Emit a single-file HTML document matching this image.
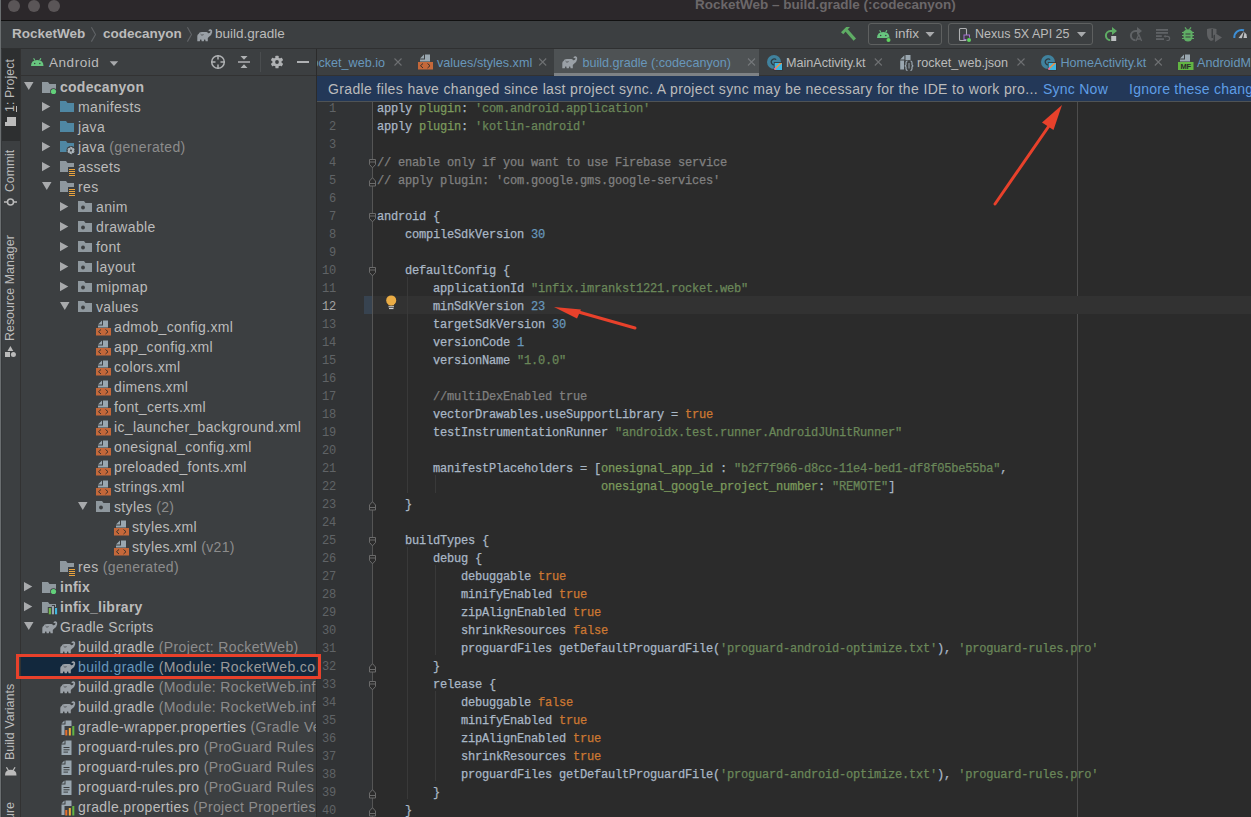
<!DOCTYPE html><html><head><meta charset="utf-8"><style>
*{box-sizing:border-box}
html,body{margin:0;padding:0}
body{width:1251px;height:817px;overflow:hidden;position:relative;background:#2b2b2b;font-family:"Liberation Sans",sans-serif;color:#bbbbbb}
.a{position:absolute}
.ui{font-family:"Liberation Sans",sans-serif;white-space:pre}
.mono{font-family:"Liberation Mono",monospace;font-size:12px;letter-spacing:-0.2px;white-space:pre;-webkit-text-stroke:0.25px}
.t{color:#a9b7c6}.s{color:#6a8759}.n{color:#6897bb}.k{color:#cc7832}.c{color:#808080}.l{color:#7b9a5c}
.ln{color:#606366;text-align:right;width:40px;-webkit-text-stroke:0}
.tr{font-size:14px;letter-spacing:0.35px;color:#bbbbbb;line-height:20px;height:20px}
.g{color:#8c8c8c}
svg{position:absolute;overflow:visible}
</style></head><body>

<div class="a" style="left:0;top:0;width:1251px;height:20px;background:#2c282b"></div>
<div class="a" style="left:8px;top:0px;width:12px;height:12px;border-radius:50%;background:#5a5557"></div>
<div class="a" style="left:28px;top:0px;width:12px;height:12px;border-radius:50%;background:#5a5557"></div>
<div class="a" style="left:48px;top:0px;width:12px;height:12px;border-radius:50%;background:#5a5557"></div>
<div class="a ui" style="left:695px;top:-3px;font-size:13.5px;font-weight:bold;color:#6b6769;line-height:16px">RocketWeb – build.gradle (:codecanyon)</div>
<div class="a" style="left:0;top:20px;width:1251px;height:1px;background:#111"></div>
<div class="a" style="left:0;top:0;width:1px;height:817px;background:#6a6e70;z-index:50"></div>
<div class="a" style="left:1px;top:49px;width:1px;height:768px;background:#36393b;z-index:50"></div>
<div class="a" style="left:1px;top:21px;width:1250px;height:27px;background:#3c3f41"></div>
<div class="a" style="left:0;top:48px;width:1251px;height:1px;background:#2f3031"></div>
<div class="a ui" style="left:12px;top:26px;font-size:13.5px;font-weight:bold;color:#bbbbbb;line-height:16px">RocketWeb</div>
<div class="a ui" style="left:103px;top:26px;font-size:13.5px;font-weight:bold;color:#bbbbbb;line-height:16px">codecanyon</div>
<div class="a ui" style="left:215px;top:26px;font-size:13.5px;color:#bbbbbb;line-height:16px">build.gradle</div>
<div class="a" style="left:1px;top:49px;width:19px;height:768px;background:#3c3f41"></div>
<div class="a" style="left:20px;top:49px;width:1px;height:768px;background:#323232"></div>
<div class="a" style="left:1px;top:49px;width:19px;height:92px;background:#2d2f30"></div>
<div class="a" style="left:21px;top:49px;width:295px;height:768px;background:#3c3f41"></div>
<div class="a" style="left:21px;top:75px;width:295px;height:1px;background:#323232"></div>
<div class="a ui" style="left:49px;top:55px;font-size:13.5px;letter-spacing:0.55px;color:#bbbbbb;line-height:16px">Android</div>
<div class="a" style="left:21px;top:76px;width:295px;height:741px;overflow:hidden">
<div class="a" style="left:-21px;top:-76px;width:1251px;height:817px">
<div class="a" style="left:21px;top:657px;width:295px;height:20px;background:#12283d"></div>
<svg style="left:24px;top:82px" width="10" height="9"><path d="M0 0H9.5L4.75 8Z" fill="#a8aaac"/></svg>
<svg style="left:42px;top:82px" width="14" height="11"><path d="M0 0H6L7.5 2H14V11H0Z" fill="#8f989e"/></svg><svg style="left:42px;top:82px" width="16" height="13"><circle cx="11.5" cy="9.5" r="3.3" fill="#3c3f41"/><circle cx="11.5" cy="9.5" r="2.6" fill="#62d07a"/></svg>
<div class="a ui tr" style="left:60px;top:77px"><span style="font-weight:bold;letter-spacing:0.25px">codecanyon</span></div>
<svg style="left:42px;top:101.8px" width="9" height="10"><path d="M0 0L8.3 4.6L0 9.2Z" fill="#a8aaac"/></svg>
<svg style="left:60px;top:101px" width="14" height="11"><path d="M0 0H6L7.5 2H14V11H0Z" fill="#4f87a3"/></svg>
<div class="a ui tr" style="left:78px;top:97px">manifests</div>
<svg style="left:42px;top:121.8px" width="9" height="10"><path d="M0 0L8.3 4.6L0 9.2Z" fill="#a8aaac"/></svg>
<svg style="left:60px;top:121px" width="14" height="11"><path d="M0 0H6L7.5 2H14V11H0Z" fill="#4f87a3"/></svg>
<div class="a ui tr" style="left:78px;top:117px">java</div>
<svg style="left:42px;top:141.8px" width="9" height="10"><path d="M0 0L8.3 4.6L0 9.2Z" fill="#a8aaac"/></svg>
<svg style="left:60px;top:141px" width="14" height="11"><path d="M0 0H6L7.5 2H14V11H0Z" fill="#4f87a3"/></svg><svg style="left:60px;top:141px" width="18" height="15"><circle cx="11" cy="9.5" r="4.6" fill="#3c3f41"/><g fill="#aeb7bd" transform="translate(11 9.5)"><path d="M0 0L-1 -3.8Q1.5 -4 2 -2Z" transform="rotate(0)"/><path d="M0 0L-1 -3.8Q1.5 -4 2 -2Z" transform="rotate(60)"/><path d="M0 0L-1 -3.8Q1.5 -4 2 -2Z" transform="rotate(120)"/><path d="M0 0L-1 -3.8Q1.5 -4 2 -2Z" transform="rotate(180)"/><path d="M0 0L-1 -3.8Q1.5 -4 2 -2Z" transform="rotate(240)"/><path d="M0 0L-1 -3.8Q1.5 -4 2 -2Z" transform="rotate(300)"/></g><circle cx="11" cy="9.5" r="1" fill="#3c3f41"/></svg>
<div class="a ui tr" style="left:78px;top:137px">java<span class="g"> (generated)</span></div>
<svg style="left:42px;top:161.8px" width="9" height="10"><path d="M0 0L8.3 4.6L0 9.2Z" fill="#a8aaac"/></svg>
<svg style="left:60px;top:161px" width="14" height="11"><path d="M0 0H6L7.5 2H14V11H0Z" fill="#8f989e"/></svg><svg style="left:60px;top:161px" width="18" height="16"><rect x="8" y="6" width="8.5" height="10" fill="#3c3f41"/><rect x="9" y="8" width="6" height="1" fill="#e8a33e"/><rect x="9" y="10" width="6" height="1" fill="#e8a33e"/><rect x="9" y="12" width="6" height="1" fill="#e8a33e"/><rect x="9" y="14" width="6" height="1" fill="#e8a33e"/></svg>
<div class="a ui tr" style="left:78px;top:157px">assets</div>
<svg style="left:42px;top:182px" width="10" height="9"><path d="M0 0H9.5L4.75 8Z" fill="#a8aaac"/></svg>
<svg style="left:60px;top:181px" width="14" height="11"><path d="M0 0H6L7.5 2H14V11H0Z" fill="#8f989e"/></svg><svg style="left:60px;top:181px" width="18" height="16"><rect x="8" y="6" width="8.5" height="10" fill="#3c3f41"/><rect x="9" y="8" width="6" height="1" fill="#e8a33e"/><rect x="9" y="10" width="6" height="1" fill="#e8a33e"/><rect x="9" y="12" width="6" height="1" fill="#e8a33e"/><rect x="9" y="14" width="6" height="1" fill="#e8a33e"/></svg>
<div class="a ui tr" style="left:78px;top:177px">res</div>
<svg style="left:60px;top:201.8px" width="9" height="10"><path d="M0 0L8.3 4.6L0 9.2Z" fill="#a8aaac"/></svg>
<svg style="left:78px;top:201px" width="14" height="11"><path d="M0 0H6L7.5 2H14V11H0Z" fill="#8f989e"/></svg><svg style="left:78px;top:201px" width="14" height="11"><circle cx="5" cy="6.5" r="1.9" fill="#3c3f41"/></svg>
<div class="a ui tr" style="left:96px;top:197px">anim</div>
<svg style="left:60px;top:221.8px" width="9" height="10"><path d="M0 0L8.3 4.6L0 9.2Z" fill="#a8aaac"/></svg>
<svg style="left:78px;top:221px" width="14" height="11"><path d="M0 0H6L7.5 2H14V11H0Z" fill="#8f989e"/></svg><svg style="left:78px;top:221px" width="14" height="11"><circle cx="5" cy="6.5" r="1.9" fill="#3c3f41"/></svg>
<div class="a ui tr" style="left:96px;top:217px">drawable</div>
<svg style="left:60px;top:241.8px" width="9" height="10"><path d="M0 0L8.3 4.6L0 9.2Z" fill="#a8aaac"/></svg>
<svg style="left:78px;top:241px" width="14" height="11"><path d="M0 0H6L7.5 2H14V11H0Z" fill="#8f989e"/></svg><svg style="left:78px;top:241px" width="14" height="11"><circle cx="5" cy="6.5" r="1.9" fill="#3c3f41"/></svg>
<div class="a ui tr" style="left:96px;top:237px">font</div>
<svg style="left:60px;top:261.8px" width="9" height="10"><path d="M0 0L8.3 4.6L0 9.2Z" fill="#a8aaac"/></svg>
<svg style="left:78px;top:261px" width="14" height="11"><path d="M0 0H6L7.5 2H14V11H0Z" fill="#8f989e"/></svg><svg style="left:78px;top:261px" width="14" height="11"><circle cx="5" cy="6.5" r="1.9" fill="#3c3f41"/></svg>
<div class="a ui tr" style="left:96px;top:257px">layout</div>
<svg style="left:60px;top:281.8px" width="9" height="10"><path d="M0 0L8.3 4.6L0 9.2Z" fill="#a8aaac"/></svg>
<svg style="left:78px;top:281px" width="14" height="11"><path d="M0 0H6L7.5 2H14V11H0Z" fill="#8f989e"/></svg><svg style="left:78px;top:281px" width="14" height="11"><circle cx="5" cy="6.5" r="1.9" fill="#3c3f41"/></svg>
<div class="a ui tr" style="left:96px;top:277px">mipmap</div>
<svg style="left:60px;top:302px" width="10" height="9"><path d="M0 0H9.5L4.75 8Z" fill="#a8aaac"/></svg>
<svg style="left:78px;top:301px" width="14" height="11"><path d="M0 0H6L7.5 2H14V11H0Z" fill="#8f989e"/></svg><svg style="left:78px;top:301px" width="14" height="11"><circle cx="5" cy="6.5" r="1.9" fill="#3c3f41"/></svg>
<div class="a ui tr" style="left:96px;top:297px">values</div>
<svg style="left:96px;top:320px" width="16" height="19"><path d="M2 7V4L5.5 0.5V4H2.5" fill="none"/><path d="M2 4.5L6 0.5V4.5Z" fill="#9aa7b0"/><path d="M7 0.5H12V7.5H2V5.5H7Z" fill="#9aa7b0"/><rect x="0" y="8" width="15" height="7.5" fill="#c4683a"/><path d="M5 9.5L2.5 11.7L5 14M9.5 9.5L12 11.7L9.5 14" stroke="#2b2b2b" stroke-width="0.9" fill="none"/></svg>
<div class="a ui tr" style="left:114px;top:317px">admob_config.xml</div>
<svg style="left:96px;top:340px" width="16" height="19"><path d="M2 7V4L5.5 0.5V4H2.5" fill="none"/><path d="M2 4.5L6 0.5V4.5Z" fill="#9aa7b0"/><path d="M7 0.5H12V7.5H2V5.5H7Z" fill="#9aa7b0"/><rect x="0" y="8" width="15" height="7.5" fill="#c4683a"/><path d="M5 9.5L2.5 11.7L5 14M9.5 9.5L12 11.7L9.5 14" stroke="#2b2b2b" stroke-width="0.9" fill="none"/></svg>
<div class="a ui tr" style="left:114px;top:337px">app_config.xml</div>
<svg style="left:96px;top:360px" width="16" height="19"><path d="M2 7V4L5.5 0.5V4H2.5" fill="none"/><path d="M2 4.5L6 0.5V4.5Z" fill="#9aa7b0"/><path d="M7 0.5H12V7.5H2V5.5H7Z" fill="#9aa7b0"/><rect x="0" y="8" width="15" height="7.5" fill="#c4683a"/><path d="M5 9.5L2.5 11.7L5 14M9.5 9.5L12 11.7L9.5 14" stroke="#2b2b2b" stroke-width="0.9" fill="none"/></svg>
<div class="a ui tr" style="left:114px;top:357px">colors.xml</div>
<svg style="left:96px;top:380px" width="16" height="19"><path d="M2 7V4L5.5 0.5V4H2.5" fill="none"/><path d="M2 4.5L6 0.5V4.5Z" fill="#9aa7b0"/><path d="M7 0.5H12V7.5H2V5.5H7Z" fill="#9aa7b0"/><rect x="0" y="8" width="15" height="7.5" fill="#c4683a"/><path d="M5 9.5L2.5 11.7L5 14M9.5 9.5L12 11.7L9.5 14" stroke="#2b2b2b" stroke-width="0.9" fill="none"/></svg>
<div class="a ui tr" style="left:114px;top:377px">dimens.xml</div>
<svg style="left:96px;top:400px" width="16" height="19"><path d="M2 7V4L5.5 0.5V4H2.5" fill="none"/><path d="M2 4.5L6 0.5V4.5Z" fill="#9aa7b0"/><path d="M7 0.5H12V7.5H2V5.5H7Z" fill="#9aa7b0"/><rect x="0" y="8" width="15" height="7.5" fill="#c4683a"/><path d="M5 9.5L2.5 11.7L5 14M9.5 9.5L12 11.7L9.5 14" stroke="#2b2b2b" stroke-width="0.9" fill="none"/></svg>
<div class="a ui tr" style="left:114px;top:397px">font_certs.xml</div>
<svg style="left:96px;top:420px" width="16" height="19"><path d="M2 7V4L5.5 0.5V4H2.5" fill="none"/><path d="M2 4.5L6 0.5V4.5Z" fill="#9aa7b0"/><path d="M7 0.5H12V7.5H2V5.5H7Z" fill="#9aa7b0"/><rect x="0" y="8" width="15" height="7.5" fill="#c4683a"/><path d="M5 9.5L2.5 11.7L5 14M9.5 9.5L12 11.7L9.5 14" stroke="#2b2b2b" stroke-width="0.9" fill="none"/></svg>
<div class="a ui tr" style="left:114px;top:417px">ic_launcher_background.xml</div>
<svg style="left:96px;top:440px" width="16" height="19"><path d="M2 7V4L5.5 0.5V4H2.5" fill="none"/><path d="M2 4.5L6 0.5V4.5Z" fill="#9aa7b0"/><path d="M7 0.5H12V7.5H2V5.5H7Z" fill="#9aa7b0"/><rect x="0" y="8" width="15" height="7.5" fill="#c4683a"/><path d="M5 9.5L2.5 11.7L5 14M9.5 9.5L12 11.7L9.5 14" stroke="#2b2b2b" stroke-width="0.9" fill="none"/></svg>
<div class="a ui tr" style="left:114px;top:437px">onesignal_config.xml</div>
<svg style="left:96px;top:460px" width="16" height="19"><path d="M2 7V4L5.5 0.5V4H2.5" fill="none"/><path d="M2 4.5L6 0.5V4.5Z" fill="#9aa7b0"/><path d="M7 0.5H12V7.5H2V5.5H7Z" fill="#9aa7b0"/><rect x="0" y="8" width="15" height="7.5" fill="#c4683a"/><path d="M5 9.5L2.5 11.7L5 14M9.5 9.5L12 11.7L9.5 14" stroke="#2b2b2b" stroke-width="0.9" fill="none"/></svg>
<div class="a ui tr" style="left:114px;top:457px">preloaded_fonts.xml</div>
<svg style="left:96px;top:480px" width="16" height="19"><path d="M2 7V4L5.5 0.5V4H2.5" fill="none"/><path d="M2 4.5L6 0.5V4.5Z" fill="#9aa7b0"/><path d="M7 0.5H12V7.5H2V5.5H7Z" fill="#9aa7b0"/><rect x="0" y="8" width="15" height="7.5" fill="#c4683a"/><path d="M5 9.5L2.5 11.7L5 14M9.5 9.5L12 11.7L9.5 14" stroke="#2b2b2b" stroke-width="0.9" fill="none"/></svg>
<div class="a ui tr" style="left:114px;top:477px">strings.xml</div>
<svg style="left:78px;top:502px" width="10" height="9"><path d="M0 0H9.5L4.75 8Z" fill="#a8aaac"/></svg>
<svg style="left:96px;top:501px" width="14" height="11"><path d="M0 0H6L7.5 2H14V11H0Z" fill="#8f989e"/></svg><svg style="left:96px;top:501px" width="14" height="11"><circle cx="5" cy="6.5" r="1.9" fill="#3c3f41"/></svg>
<div class="a ui tr" style="left:114px;top:497px">styles<span class="g"> (2)</span></div>
<svg style="left:114px;top:520px" width="16" height="19"><path d="M2 7V4L5.5 0.5V4H2.5" fill="none"/><path d="M2 4.5L6 0.5V4.5Z" fill="#9aa7b0"/><path d="M7 0.5H12V7.5H2V5.5H7Z" fill="#9aa7b0"/><rect x="0" y="8" width="15" height="7.5" fill="#c4683a"/><path d="M5 9.5L2.5 11.7L5 14M9.5 9.5L12 11.7L9.5 14" stroke="#2b2b2b" stroke-width="0.9" fill="none"/></svg>
<div class="a ui tr" style="left:132px;top:517px">styles.xml</div>
<svg style="left:114px;top:540px" width="16" height="19"><path d="M2 7V4L5.5 0.5V4H2.5" fill="none"/><path d="M2 4.5L6 0.5V4.5Z" fill="#9aa7b0"/><path d="M7 0.5H12V7.5H2V5.5H7Z" fill="#9aa7b0"/><rect x="0" y="8" width="15" height="7.5" fill="#c4683a"/><path d="M5 9.5L2.5 11.7L5 14M9.5 9.5L12 11.7L9.5 14" stroke="#2b2b2b" stroke-width="0.9" fill="none"/></svg>
<div class="a ui tr" style="left:132px;top:537px">styles.xml<span class="g"> (v21)</span></div>
<svg style="left:60px;top:561px" width="14" height="11"><path d="M0 0H6L7.5 2H14V11H0Z" fill="#8f989e"/></svg><svg style="left:60px;top:561px" width="18" height="16"><rect x="8" y="6" width="8.5" height="10" fill="#3c3f41"/><rect x="9" y="8" width="6" height="1" fill="#e8a33e"/><rect x="9" y="10" width="6" height="1" fill="#e8a33e"/><rect x="9" y="12" width="6" height="1" fill="#e8a33e"/><rect x="9" y="14" width="6" height="1" fill="#e8a33e"/></svg>
<div class="a ui tr" style="left:78px;top:557px">res<span class="g"> (generated)</span></div>
<svg style="left:24px;top:581.8px" width="9" height="10"><path d="M0 0L8.3 4.6L0 9.2Z" fill="#a8aaac"/></svg>
<svg style="left:42px;top:582px" width="14" height="11"><path d="M0 0H6L7.5 2H14V11H0Z" fill="#8f989e"/></svg><svg style="left:42px;top:582px" width="16" height="13"><circle cx="11.5" cy="9.5" r="3.3" fill="#3c3f41"/><circle cx="11.5" cy="9.5" r="2.6" fill="#62d07a"/></svg>
<div class="a ui tr" style="left:60px;top:577px"><span style="font-weight:bold;letter-spacing:0.25px">infix</span></div>
<svg style="left:24px;top:601.8px" width="9" height="10"><path d="M0 0L8.3 4.6L0 9.2Z" fill="#a8aaac"/></svg>
<svg style="left:42px;top:602px" width="14" height="11"><path d="M0 0H6L7.5 2H14V11H0Z" fill="#8f989e"/></svg><svg style="left:42px;top:602px" width="18" height="15"><path d="M5.8 5H9.9V3H13V5H16.1V13.3H5.8Z" fill="#3c3f41"/><rect x="6.8" y="6" width="2.1" height="6.3" fill="#72b94b"/><rect x="9.9" y="4" width="2.1" height="8.3" fill="#9aa7b0"/><rect x="13" y="6" width="2.1" height="6.3" fill="#40b6e0"/></svg>
<div class="a ui tr" style="left:60px;top:597px"><span style="font-weight:bold;letter-spacing:0.25px">infix_library</span></div>
<svg style="left:24px;top:622px" width="10" height="9"><path d="M0 0H9.5L4.75 8Z" fill="#a8aaac"/></svg>
<svg style="left:42px;top:621px" width="16" height="13" viewBox="0 0 16 13"><path d="M0.3 12.2V7.2Q0.3 5.6 1.6 5L2.6 3.6Q3.4 3 5 3H9.4Q10.6 3 11 4.2Q12.6 4.4 13.3 3.3Q13.7 2.6 13.2 2.1Q12.6 1.7 12 2.3L11.4 1.2Q12.5 0 13.8 0.3Q15.6 0.9 15.2 3.2Q14.8 5.6 12.3 7.6L10.8 9V12.2H8.6L8.2 10.6H7.2L6.8 12.2H4.7L4.3 10.6H3.2L2.8 12.2Z" fill="#9aa0a6"/><path d="M3.6 5.2Q4.6 7 6.6 5.6" stroke="#3c3f41" stroke-width="0.9" fill="none" opacity="0.8"/></svg>
<div class="a ui tr" style="left:60px;top:617px">Gradle Scripts</div>
<svg style="left:60px;top:641px" width="16" height="13" viewBox="0 0 16 13"><path d="M0.3 12.2V7.2Q0.3 5.6 1.6 5L2.6 3.6Q3.4 3 5 3H9.4Q10.6 3 11 4.2Q12.6 4.4 13.3 3.3Q13.7 2.6 13.2 2.1Q12.6 1.7 12 2.3L11.4 1.2Q12.5 0 13.8 0.3Q15.6 0.9 15.2 3.2Q14.8 5.6 12.3 7.6L10.8 9V12.2H8.6L8.2 10.6H7.2L6.8 12.2H4.7L4.3 10.6H3.2L2.8 12.2Z" fill="#9aa0a6"/><path d="M3.6 5.2Q4.6 7 6.6 5.6" stroke="#3c3f41" stroke-width="0.9" fill="none" opacity="0.8"/></svg>
<div class="a ui tr" style="left:78px;top:637px">build.gradle<span class="g"> (Project: RocketWeb)</span></div>
<svg style="left:60px;top:661px" width="16" height="13" viewBox="0 0 16 13"><path d="M0.3 12.2V7.2Q0.3 5.6 1.6 5L2.6 3.6Q3.4 3 5 3H9.4Q10.6 3 11 4.2Q12.6 4.4 13.3 3.3Q13.7 2.6 13.2 2.1Q12.6 1.7 12 2.3L11.4 1.2Q12.5 0 13.8 0.3Q15.6 0.9 15.2 3.2Q14.8 5.6 12.3 7.6L10.8 9V12.2H8.6L8.2 10.6H7.2L6.8 12.2H4.7L4.3 10.6H3.2L2.8 12.2Z" fill="#9aa0a6"/><path d="M3.6 5.2Q4.6 7 6.6 5.6" stroke="#3c3f41" stroke-width="0.9" fill="none" opacity="0.8"/></svg>
<div class="a ui tr" style="left:78px;top:657px"><span style="color:#6897bb">build.gradle</span><span style="color:#9a9a9a"> (Module: RocketWeb.codecanyon)</span></div>
<svg style="left:60px;top:681px" width="16" height="13" viewBox="0 0 16 13"><path d="M0.3 12.2V7.2Q0.3 5.6 1.6 5L2.6 3.6Q3.4 3 5 3H9.4Q10.6 3 11 4.2Q12.6 4.4 13.3 3.3Q13.7 2.6 13.2 2.1Q12.6 1.7 12 2.3L11.4 1.2Q12.5 0 13.8 0.3Q15.6 0.9 15.2 3.2Q14.8 5.6 12.3 7.6L10.8 9V12.2H8.6L8.2 10.6H7.2L6.8 12.2H4.7L4.3 10.6H3.2L2.8 12.2Z" fill="#9aa0a6"/><path d="M3.6 5.2Q4.6 7 6.6 5.6" stroke="#3c3f41" stroke-width="0.9" fill="none" opacity="0.8"/></svg>
<div class="a ui tr" style="left:78px;top:677px">build.gradle<span class="g"> (Module: RocketWeb.infix)</span></div>
<svg style="left:60px;top:701px" width="16" height="13" viewBox="0 0 16 13"><path d="M0.3 12.2V7.2Q0.3 5.6 1.6 5L2.6 3.6Q3.4 3 5 3H9.4Q10.6 3 11 4.2Q12.6 4.4 13.3 3.3Q13.7 2.6 13.2 2.1Q12.6 1.7 12 2.3L11.4 1.2Q12.5 0 13.8 0.3Q15.6 0.9 15.2 3.2Q14.8 5.6 12.3 7.6L10.8 9V12.2H8.6L8.2 10.6H7.2L6.8 12.2H4.7L4.3 10.6H3.2L2.8 12.2Z" fill="#9aa0a6"/><path d="M3.6 5.2Q4.6 7 6.6 5.6" stroke="#3c3f41" stroke-width="0.9" fill="none" opacity="0.8"/></svg>
<div class="a ui tr" style="left:78px;top:697px">build.gradle<span class="g"> (Module: RocketWeb.infix_library)</span></div>
<svg style="left:61px;top:720px" width="16" height="16"><path d="M0.5 3.5L3.5 0.5V3.5Z" fill="#9aa7b0"/><path d="M4.5 0.5H10.5V15H0.5V4.5H4.5Z" fill="#9aa7b0"/><rect x="3.5" y="6" width="12" height="10" fill="#3c3f41"/><rect x="4.3" y="10" width="2" height="5.5" fill="#e6702e"/><rect x="7.8" y="8" width="2" height="7.5" fill="#f4af3d"/><rect x="11.3" y="6" width="2" height="9.5" fill="#62b543"/></svg>
<div class="a ui tr" style="left:78px;top:717px">gradle-wrapper.properties<span class="g"> (Gradle Version)</span></div>
<svg style="left:61px;top:740px" width="16" height="16"><path d="M0.5 3.5L3.5 0.5V3.5Z" fill="#9aa7b0"/><path d="M4.5 0.5H10.5V15H0.5V4.5H4.5Z" fill="#9aa7b0"/><rect x="2.5" y="7" width="6" height="1" fill="#3c3f41"/><rect x="2.5" y="9.3" width="6" height="1" fill="#3c3f41"/><rect x="2.5" y="11.6" width="4.5" height="1" fill="#3c3f41"/></svg>
<div class="a ui tr" style="left:78px;top:737px">proguard-rules.pro<span class="g"> (ProGuard Rules for infix)</span></div>
<svg style="left:61px;top:760px" width="16" height="16"><path d="M0.5 3.5L3.5 0.5V3.5Z" fill="#9aa7b0"/><path d="M4.5 0.5H10.5V15H0.5V4.5H4.5Z" fill="#9aa7b0"/><rect x="2.5" y="7" width="6" height="1" fill="#3c3f41"/><rect x="2.5" y="9.3" width="6" height="1" fill="#3c3f41"/><rect x="2.5" y="11.6" width="4.5" height="1" fill="#3c3f41"/></svg>
<div class="a ui tr" style="left:78px;top:757px">proguard-rules.pro<span class="g"> (ProGuard Rules for codecanyon)</span></div>
<svg style="left:61px;top:780px" width="16" height="16"><path d="M0.5 3.5L3.5 0.5V3.5Z" fill="#9aa7b0"/><path d="M4.5 0.5H10.5V15H0.5V4.5H4.5Z" fill="#9aa7b0"/><rect x="2.5" y="7" width="6" height="1" fill="#3c3f41"/><rect x="2.5" y="9.3" width="6" height="1" fill="#3c3f41"/><rect x="2.5" y="11.6" width="4.5" height="1" fill="#3c3f41"/></svg>
<div class="a ui tr" style="left:78px;top:777px">proguard-rules.pro<span class="g"> (ProGuard Rules for infix_library)</span></div>
<svg style="left:61px;top:800px" width="16" height="16"><path d="M0.5 3.5L3.5 0.5V3.5Z" fill="#9aa7b0"/><path d="M4.5 0.5H10.5V15H0.5V4.5H4.5Z" fill="#9aa7b0"/><rect x="3.5" y="6" width="12" height="10" fill="#3c3f41"/><rect x="4.3" y="10" width="2" height="5.5" fill="#e6702e"/><rect x="7.8" y="8" width="2" height="7.5" fill="#f4af3d"/><rect x="11.3" y="6" width="2" height="9.5" fill="#62b543"/></svg>
<div class="a ui tr" style="left:78px;top:797px">gradle.properties<span class="g"> (Project Properties)</span></div>
</div></div>
<div class="a" style="left:316px;top:49px;width:1px;height:768px;background:#2b2b2b"></div>
<div class="a" style="left:317px;top:49px;width:934px;height:26px;background:#3c3f41"></div>
<div class="a" style="left:317px;top:75px;width:934px;height:1px;background:#323232"></div>
<div class="a" style="left:554px;top:49px;width:205px;height:26px;background:#4e5254"></div>
<div class="a" style="left:554px;top:73px;width:205px;height:3px;background:#7e8285;z-index:2"></div>
<div class="a" style="left:317px;top:76px;width:934px;height:25px;background:#233858"></div>
<div class="a ui" style="left:328px;top:81px;font-size:14px;letter-spacing:0.36px;color:#bbbbbb;line-height:16px">Gradle files have changed since last project sync. A project sync may be necessary for the IDE to work pro...</div>
<div class="a ui" style="left:1043px;top:81px;font-size:14px;letter-spacing:0.25px;color:#5f9ee6;line-height:16px">Sync Now</div>
<div class="a ui" style="left:1129px;top:81px;font-size:14px;letter-spacing:0.25px;color:#5f9ee6;line-height:16px">Ignore these changes</div>
<div class="a" style="left:317px;top:101px;width:55px;height:716px;background:#313335"></div>
<div class="a" style="left:372px;top:101px;width:1px;height:716px;background:#555555"></div>
<div class="a" style="left:1077px;top:101px;width:1px;height:716px;background:#4d4d4d"></div>
<div class="a" style="left:317px;top:101px;width:934px;height:1px;background:#4f5355;z-index:5"></div>
<div class="a" style="left:373px;top:296px;width:878px;height:18px;background:#323232"></div>
<div class="a" style="left:407px;top:277px;width:1px;height:216px;background:#393939"></div>
<div class="a" style="left:407px;top:547px;width:1px;height:252px;background:#393939"></div>
<div class="a" style="left:435px;top:565px;width:1px;height:90px;background:#393939"></div>
<div class="a" style="left:435px;top:691px;width:1px;height:90px;background:#393939"></div>
<div class="a" style="left:435px;top:475px;width:1px;height:18px;background:#393939"></div>
<svg style="left:369px;top:158.5px" width="8" height="10"><path d="M0.5 0.5H6.5V5.5L3.5 8.8L0.5 5.5Z" fill="#2b2b2b" stroke="#6b6b6b" stroke-width="1"/><path d="M0.5 3H6.5" stroke="#6b6b6b" stroke-width="1"/></svg>
<svg style="left:369px;top:212.5px" width="8" height="10"><path d="M0.5 0.5H6.5V5.5L3.5 8.8L0.5 5.5Z" fill="#2b2b2b" stroke="#6b6b6b" stroke-width="1"/><path d="M0.5 3H6.5" stroke="#6b6b6b" stroke-width="1"/></svg>
<svg style="left:369px;top:266.5px" width="8" height="10"><path d="M0.5 0.5H6.5V5.5L3.5 8.8L0.5 5.5Z" fill="#2b2b2b" stroke="#6b6b6b" stroke-width="1"/><path d="M0.5 3H6.5" stroke="#6b6b6b" stroke-width="1"/></svg>
<svg style="left:369px;top:536.5px" width="8" height="10"><path d="M0.5 0.5H6.5V5.5L3.5 8.8L0.5 5.5Z" fill="#2b2b2b" stroke="#6b6b6b" stroke-width="1"/><path d="M0.5 3H6.5" stroke="#6b6b6b" stroke-width="1"/></svg>
<svg style="left:369px;top:554.5px" width="8" height="10"><path d="M0.5 0.5H6.5V5.5L3.5 8.8L0.5 5.5Z" fill="#2b2b2b" stroke="#6b6b6b" stroke-width="1"/><path d="M0.5 3H6.5" stroke="#6b6b6b" stroke-width="1"/></svg>
<svg style="left:369px;top:680.5px" width="8" height="10"><path d="M0.5 0.5H6.5V5.5L3.5 8.8L0.5 5.5Z" fill="#2b2b2b" stroke="#6b6b6b" stroke-width="1"/><path d="M0.5 3H6.5" stroke="#6b6b6b" stroke-width="1"/></svg>
<svg style="left:369px;top:176.5px" width="8" height="10"><path d="M0.5 9H6.5V4L3.5 0.7L0.5 4Z" fill="#2b2b2b" stroke="#6b6b6b" stroke-width="1"/><path d="M0.5 6.5H6.5" stroke="#6b6b6b" stroke-width="1"/></svg>
<svg style="left:369px;top:500.5px" width="8" height="10"><path d="M0.5 9H6.5V4L3.5 0.7L0.5 4Z" fill="#2b2b2b" stroke="#6b6b6b" stroke-width="1"/><path d="M0.5 6.5H6.5" stroke="#6b6b6b" stroke-width="1"/></svg>
<svg style="left:369px;top:662.5px" width="8" height="10"><path d="M0.5 9H6.5V4L3.5 0.7L0.5 4Z" fill="#2b2b2b" stroke="#6b6b6b" stroke-width="1"/><path d="M0.5 6.5H6.5" stroke="#6b6b6b" stroke-width="1"/></svg>
<svg style="left:369px;top:788.5px" width="8" height="10"><path d="M0.5 9H6.5V4L3.5 0.7L0.5 4Z" fill="#2b2b2b" stroke="#6b6b6b" stroke-width="1"/><path d="M0.5 6.5H6.5" stroke="#6b6b6b" stroke-width="1"/></svg>
<svg style="left:369px;top:806.5px" width="8" height="10"><path d="M0.5 9H6.5V4L3.5 0.7L0.5 4Z" fill="#2b2b2b" stroke="#6b6b6b" stroke-width="1"/><path d="M0.5 6.5H6.5" stroke="#6b6b6b" stroke-width="1"/></svg>
<div class="a" style="left:364px;top:296px;width:8px;height:18px;background:#374350"></div>
<svg style="left:385.5px;top:294.5px" width="12" height="16"><circle cx="5.2" cy="5.4" r="5" fill="#eaac45"/><path d="M2.5 7.5H8V10.3H2.5Z" fill="#eaac45"/><rect x="2.5" y="11.2" width="5.5" height="1.1" fill="#d0d0d0"/><rect x="3" y="13" width="4.5" height="1.1" fill="#d0d0d0"/></svg>
<div class="a" style="left:0;top:101px;width:1251px;height:716px;overflow:hidden">
<div class="a mono ln" style="left:296px;top:-1px;line-height:18px;color:#606366">1</div>
<div class="a mono" style="left:377px;top:-1px;line-height:18px"><span class="t">apply </span><span class="l">plugin</span><span class="t">: </span><span class="s">&#x27;com.android.application&#x27;</span></div>
<div class="a mono ln" style="left:296px;top:17px;line-height:18px;color:#606366">2</div>
<div class="a mono" style="left:377px;top:17px;line-height:18px"><span class="t">apply </span><span class="l">plugin</span><span class="t">: </span><span class="s">&#x27;kotlin-android&#x27;</span></div>
<div class="a mono ln" style="left:296px;top:35px;line-height:18px;color:#606366">3</div>
<div class="a mono ln" style="left:296px;top:53px;line-height:18px;color:#606366">4</div>
<div class="a mono" style="left:377px;top:53px;line-height:18px"><span class="c">// enable only if you want to use Firebase service</span></div>
<div class="a mono ln" style="left:296px;top:71px;line-height:18px;color:#606366">5</div>
<div class="a mono" style="left:377px;top:71px;line-height:18px"><span class="c">// apply plugin: &#x27;com.google.gms.google-services&#x27;</span></div>
<div class="a mono ln" style="left:296px;top:89px;line-height:18px;color:#606366">6</div>
<div class="a mono ln" style="left:296px;top:107px;line-height:18px;color:#606366">7</div>
<div class="a mono" style="left:377px;top:107px;line-height:18px"><span class="t">android {</span></div>
<div class="a mono ln" style="left:296px;top:125px;line-height:18px;color:#606366">8</div>
<div class="a mono" style="left:377px;top:125px;line-height:18px"><span class="t">    compileSdkVersion </span><span class="n">30</span></div>
<div class="a mono ln" style="left:296px;top:143px;line-height:18px;color:#606366">9</div>
<div class="a mono ln" style="left:296px;top:161px;line-height:18px;color:#606366">10</div>
<div class="a mono" style="left:377px;top:161px;line-height:18px"><span class="t">    defaultConfig {</span></div>
<div class="a mono ln" style="left:296px;top:179px;line-height:18px;color:#606366">11</div>
<div class="a mono" style="left:377px;top:179px;line-height:18px"><span class="t">        applicationId </span><span class="s">&quot;infix.imrankst1221.rocket.web&quot;</span></div>
<div class="a mono ln" style="left:296px;top:197px;line-height:18px;color:#a4a3a3">12</div>
<div class="a mono" style="left:377px;top:197px;line-height:18px"><span class="t">        minSdkVersion </span><span class="n">23</span></div>
<div class="a mono ln" style="left:296px;top:215px;line-height:18px;color:#606366">13</div>
<div class="a mono" style="left:377px;top:215px;line-height:18px"><span class="t">        targetSdkVersion </span><span class="n">30</span></div>
<div class="a mono ln" style="left:296px;top:233px;line-height:18px;color:#606366">14</div>
<div class="a mono" style="left:377px;top:233px;line-height:18px"><span class="t">        versionCode </span><span class="n">1</span></div>
<div class="a mono ln" style="left:296px;top:251px;line-height:18px;color:#606366">15</div>
<div class="a mono" style="left:377px;top:251px;line-height:18px"><span class="t">        versionName </span><span class="s">&quot;1.0.0&quot;</span></div>
<div class="a mono ln" style="left:296px;top:269px;line-height:18px;color:#606366">16</div>
<div class="a mono ln" style="left:296px;top:287px;line-height:18px;color:#606366">17</div>
<div class="a mono" style="left:377px;top:287px;line-height:18px"><span class="c">        //multiDexEnabled true</span></div>
<div class="a mono ln" style="left:296px;top:305px;line-height:18px;color:#606366">18</div>
<div class="a mono" style="left:377px;top:305px;line-height:18px"><span class="t">        vectorDrawables.useSupportLibrary = </span><span class="k">true</span></div>
<div class="a mono ln" style="left:296px;top:323px;line-height:18px;color:#606366">19</div>
<div class="a mono" style="left:377px;top:323px;line-height:18px"><span class="t">        testInstrumentationRunner </span><span class="s">&quot;androidx.test.runner.AndroidJUnitRunner&quot;</span></div>
<div class="a mono ln" style="left:296px;top:341px;line-height:18px;color:#606366">20</div>
<div class="a mono ln" style="left:296px;top:359px;line-height:18px;color:#606366">21</div>
<div class="a mono" style="left:377px;top:359px;line-height:18px"><span class="t">        manifestPlaceholders = [</span><span class="l">onesignal_app_id</span><span class="t"> : </span><span class="s">&quot;b2f7f966-d8cc-11e4-bed1-df8f05be55ba&quot;</span><span class="t">,</span></div>
<div class="a mono ln" style="left:296px;top:377px;line-height:18px;color:#606366">22</div>
<div class="a mono" style="left:377px;top:377px;line-height:18px"><span class="t">                                </span><span class="l">onesignal_google_project_number</span><span class="t">: </span><span class="s">&quot;REMOTE&quot;</span><span class="t">]</span></div>
<div class="a mono ln" style="left:296px;top:395px;line-height:18px;color:#606366">23</div>
<div class="a mono" style="left:377px;top:395px;line-height:18px"><span class="t">    }</span></div>
<div class="a mono ln" style="left:296px;top:413px;line-height:18px;color:#606366">24</div>
<div class="a mono ln" style="left:296px;top:431px;line-height:18px;color:#606366">25</div>
<div class="a mono" style="left:377px;top:431px;line-height:18px"><span class="t">    buildTypes {</span></div>
<div class="a mono ln" style="left:296px;top:449px;line-height:18px;color:#606366">26</div>
<div class="a mono" style="left:377px;top:449px;line-height:18px"><span class="t">        debug {</span></div>
<div class="a mono ln" style="left:296px;top:467px;line-height:18px;color:#606366">27</div>
<div class="a mono" style="left:377px;top:467px;line-height:18px"><span class="t">            debuggable </span><span class="k">true</span></div>
<div class="a mono ln" style="left:296px;top:485px;line-height:18px;color:#606366">28</div>
<div class="a mono" style="left:377px;top:485px;line-height:18px"><span class="t">            minifyEnabled </span><span class="k">true</span></div>
<div class="a mono ln" style="left:296px;top:503px;line-height:18px;color:#606366">29</div>
<div class="a mono" style="left:377px;top:503px;line-height:18px"><span class="t">            zipAlignEnabled </span><span class="k">true</span></div>
<div class="a mono ln" style="left:296px;top:521px;line-height:18px;color:#606366">30</div>
<div class="a mono" style="left:377px;top:521px;line-height:18px"><span class="t">            shrinkResources </span><span class="k">false</span></div>
<div class="a mono ln" style="left:296px;top:539px;line-height:18px;color:#606366">31</div>
<div class="a mono" style="left:377px;top:539px;line-height:18px"><span class="t">            proguardFiles getDefaultProguardFile(</span><span class="s">&#x27;proguard-android-optimize.txt&#x27;</span><span class="t">), </span><span class="s">&#x27;proguard-rules.pro&#x27;</span></div>
<div class="a mono ln" style="left:296px;top:557px;line-height:18px;color:#606366">32</div>
<div class="a mono" style="left:377px;top:557px;line-height:18px"><span class="t">        }</span></div>
<div class="a mono ln" style="left:296px;top:575px;line-height:18px;color:#606366">33</div>
<div class="a mono" style="left:377px;top:575px;line-height:18px"><span class="t">        release {</span></div>
<div class="a mono ln" style="left:296px;top:593px;line-height:18px;color:#606366">34</div>
<div class="a mono" style="left:377px;top:593px;line-height:18px"><span class="t">            debuggable </span><span class="k">false</span></div>
<div class="a mono ln" style="left:296px;top:611px;line-height:18px;color:#606366">35</div>
<div class="a mono" style="left:377px;top:611px;line-height:18px"><span class="t">            minifyEnabled </span><span class="k">true</span></div>
<div class="a mono ln" style="left:296px;top:629px;line-height:18px;color:#606366">36</div>
<div class="a mono" style="left:377px;top:629px;line-height:18px"><span class="t">            zipAlignEnabled </span><span class="k">true</span></div>
<div class="a mono ln" style="left:296px;top:647px;line-height:18px;color:#606366">37</div>
<div class="a mono" style="left:377px;top:647px;line-height:18px"><span class="t">            shrinkResources </span><span class="k">true</span></div>
<div class="a mono ln" style="left:296px;top:665px;line-height:18px;color:#606366">38</div>
<div class="a mono" style="left:377px;top:665px;line-height:18px"><span class="t">            proguardFiles getDefaultProguardFile(</span><span class="s">&#x27;proguard-android-optimize.txt&#x27;</span><span class="t">), </span><span class="s">&#x27;proguard-rules.pro&#x27;</span></div>
<div class="a mono ln" style="left:296px;top:683px;line-height:18px;color:#606366">39</div>
<div class="a mono" style="left:377px;top:683px;line-height:18px"><span class="t">        }</span></div>
<div class="a mono ln" style="left:296px;top:701px;line-height:18px;color:#606366">40</div>
<div class="a mono" style="left:377px;top:701px;line-height:18px"><span class="t">    }</span></div>
</div>
<svg style="left:0;top:0" width="1" height="1"><path d="M91.4 27.3L95.5 34.5L91.4 41.6" stroke="#606366" stroke-width="1.1" fill="none"/></svg>
<svg style="left:0;top:0" width="1" height="1"><path d="M187.4 27.3L191.5 34.5L187.4 41.6" stroke="#606366" stroke-width="1.1" fill="none"/></svg>
<svg style="left:196.5px;top:28.5px" width="16" height="13" viewBox="0 0 16 13"><path d="M0.3 12.2V7.2Q0.3 5.6 1.6 5L2.6 3.6Q3.4 3 5 3H9.4Q10.6 3 11 4.2Q12.6 4.4 13.3 3.3Q13.7 2.6 13.2 2.1Q12.6 1.7 12 2.3L11.4 1.2Q12.5 0 13.8 0.3Q15.6 0.9 15.2 3.2Q14.8 5.6 12.3 7.6L10.8 9V12.2H8.6L8.2 10.6H7.2L6.8 12.2H4.7L4.3 10.6H3.2L2.8 12.2Z" fill="#9aa0a6"/><path d="M3.6 5.2Q4.6 7 6.6 5.6" stroke="#3c3f41" stroke-width="0.9" fill="none" opacity="0.8"/></svg>
<svg style="left:30.8px;top:58px" width="12.5" height="8" viewBox="0 0 12.5 8"><path d="M0 8Q0 2 6.25 2Q12.5 2 12.5 8Z" fill="#68c67f"/><path d="M2.6 0.2L3.9 2.6M9.9 0.2L8.6 2.6" stroke="#68c67f" stroke-width="1.1"/><circle cx="3.7" cy="5.4" r="0.75" fill="#3c3f41"/><circle cx="8.8" cy="5.4" r="0.75" fill="#3c3f41"/></svg>
<svg style="left:0;top:0" width="1" height="1"><path d="M109.7 61.2H118.2L113.95 65.9Z" fill="#a8aaac"/></svg>
<svg style="left:0;top:0" width="1" height="1"><circle cx="218" cy="62" r="6.3" stroke="#afb1b3" stroke-width="1.5" fill="none"/><path d="M218 55V59.5M218 64.5V69M211 62H215.5M220.5 62H225" stroke="#afb1b3" stroke-width="1.5"/></svg>
<svg style="left:0;top:0" width="1" height="1"><path d="M238 62H250" stroke="#afb1b3" stroke-width="1.5"/><path d="M240.5 56H247.5L244 59.8Z M240.5 68H247.5L244 64.2Z" fill="#afb1b3"/></svg>
<div class="a" style="left:260px;top:52px;width:1px;height:20px;background:#4a4d4f"></div>
<svg style="left:0;top:0" width="1" height="1"><g transform="translate(277 62)" fill="#afb1b3"><rect x="-1.6" y="-6.3" width="3.2" height="3" rx="0.6" transform="rotate(0)"/><rect x="-1.6" y="-6.3" width="3.2" height="3" rx="0.6" transform="rotate(60)"/><rect x="-1.6" y="-6.3" width="3.2" height="3" rx="0.6" transform="rotate(120)"/><rect x="-1.6" y="-6.3" width="3.2" height="3" rx="0.6" transform="rotate(180)"/><rect x="-1.6" y="-6.3" width="3.2" height="3" rx="0.6" transform="rotate(240)"/><rect x="-1.6" y="-6.3" width="3.2" height="3" rx="0.6" transform="rotate(300)"/><circle r="4.6"/><circle r="1.9" fill="#3c3f41"/></g></svg>
<div class="a" style="left:297px;top:61px;width:12px;height:2px;background:#afb1b3"></div>
<div class="a" style="left:317px;top:49px;width:237px;height:26px;overflow:hidden">
<div class="a ui" style="left:-132px;top:6px;font-size:12.6px;color:#6897bb;line-height:16px;text-align:right;width:200px;white-space:pre">rocket_web.io</div>
</div>
<svg style="left:0;top:0" width="1" height="1"><path d="M394.5 58.5L401.5 65.5M401.5 58.5L394.5 65.5" stroke="#6e7072" stroke-width="1.1"/></svg>
<svg style="left:418px;top:54px" width="16" height="19"><path d="M2 7V4L5.5 0.5V4H2.5" fill="none"/><path d="M2 4.5L6 0.5V4.5Z" fill="#9aa7b0"/><path d="M7 0.5H12V7.5H2V5.5H7Z" fill="#9aa7b0"/><rect x="0" y="8" width="15" height="7.5" fill="#c4683a"/><path d="M5 9.5L2.5 11.7L5 14M9.5 9.5L12 11.7L9.5 14" stroke="#2b2b2b" stroke-width="0.9" fill="none"/></svg>
<div class="a ui" style="left:437px;top:55px;font-size:12.6px;color:#6897bb;line-height:16px">values/styles.xml</div>
<svg style="left:0;top:0" width="1" height="1"><path d="M539.2 58.5L546.2 65.5M546.2 58.5L539.2 65.5" stroke="#6e7072" stroke-width="1.1"/></svg>
<svg style="left:562px;top:56px" width="16" height="13" viewBox="0 0 16 13"><path d="M0.3 12.2V7.2Q0.3 5.6 1.6 5L2.6 3.6Q3.4 3 5 3H9.4Q10.6 3 11 4.2Q12.6 4.4 13.3 3.3Q13.7 2.6 13.2 2.1Q12.6 1.7 12 2.3L11.4 1.2Q12.5 0 13.8 0.3Q15.6 0.9 15.2 3.2Q14.8 5.6 12.3 7.6L10.8 9V12.2H8.6L8.2 10.6H7.2L6.8 12.2H4.7L4.3 10.6H3.2L2.8 12.2Z" fill="#9aa0a6"/><path d="M3.6 5.2Q4.6 7 6.6 5.6" stroke="#3c3f41" stroke-width="0.9" fill="none" opacity="0.8"/></svg>
<div class="a ui" style="left:582.5px;top:55px;font-size:12.6px;color:#6897bb;line-height:16px">build.gradle (:codecanyon)</div>
<svg style="left:0;top:0" width="1" height="1"><path d="M748.0 58.5L755.0 65.5M755.0 58.5L748.0 65.5" stroke="#74777a" stroke-width="1.1"/></svg>
<svg style="left:766.5px;top:55px" width="17" height="17" viewBox="0 0 17 17"><circle cx="7" cy="7" r="7" fill="#40829e"/><path d="M9.2 4.6A3 3 0 1 0 8.6 9.6" stroke="#2e3b41" stroke-width="1.2" fill="none"/><rect x="6.8" y="7.2" width="9" height="8.5" fill="#333638"/><rect x="7.6" y="8" width="7.4" height="7" fill="#40b6e0"/><path d="M7.6 13.2L12.8 8H15L7.6 15Z" fill="#f88d3a"/><path d="M7.6 13.2L9 11.8V15H7.6Z" fill="#e06aa0"/><path d="M11.2 11.5L15 15H11.5Z" fill="#40b6e0"/></svg>
<div class="a ui" style="left:786px;top:55px;font-size:12.6px;color:#bbbbbb;line-height:16px">MainActivity.kt</div>
<svg style="left:0;top:0" width="1" height="1"><path d="M874.8 58.5L881.8 65.5M881.8 58.5L874.8 65.5" stroke="#6e7072" stroke-width="1.1"/></svg>
<svg style="left:899.7px;top:54.6px" width="16" height="17" viewBox="0 0 16 17"><path d="M0.2 4.4L4.4 0.2V4.4Z" fill="#9aa7b0"/><path d="M5.5 0H10.5V5.5H5.5Z M0.2 5.5H5.5V14.5H0.2Z" fill="#9aa7b0"/><path d="M4 5.2H14V16H4Z" fill="#3c3f41"/><path d="M7.6 6Q6 6 6 7.8V9.5Q6 10.5 4.8 10.8Q6 11.1 6 12.1V13.8Q6 15.5 7.6 15.5M10.4 6Q12 6 12 7.8V9.5Q12 10.5 13.2 10.8Q12 11.1 12 12.1V13.8Q12 15.5 10.4 15.5" stroke="#9aa7b0" stroke-width="1.2" fill="none"/><path d="M9 8V13.5" stroke="#9aa7b0" stroke-width="1"/></svg>
<div class="a ui" style="left:917px;top:55px;font-size:12.6px;color:#bbbbbb;line-height:16px">rocket_web.json</div>
<svg style="left:0;top:0" width="1" height="1"><path d="M1017.5 58.5L1024.5 65.5M1024.5 58.5L1017.5 65.5" stroke="#6e7072" stroke-width="1.1"/></svg>
<svg style="left:1041px;top:55px" width="17" height="17" viewBox="0 0 17 17"><circle cx="7" cy="7" r="7" fill="#40829e"/><path d="M9.2 4.6A3 3 0 1 0 8.6 9.6" stroke="#2e3b41" stroke-width="1.2" fill="none"/><rect x="6.8" y="7.2" width="9" height="8.5" fill="#333638"/><rect x="7.6" y="8" width="7.4" height="7" fill="#40b6e0"/><path d="M7.6 13.2L12.8 8H15L7.6 15Z" fill="#f88d3a"/><path d="M7.6 13.2L9 11.8V15H7.6Z" fill="#e06aa0"/><path d="M11.2 11.5L15 15H11.5Z" fill="#40b6e0"/></svg>
<div class="a ui" style="left:1060.5px;top:55px;font-size:12.6px;color:#6897bb;line-height:16px">HomeActivity.kt</div>
<svg style="left:0;top:0" width="1" height="1"><path d="M1154.8 58.5L1161.8 65.5M1161.8 58.5L1154.8 65.5" stroke="#6e7072" stroke-width="1.1"/></svg>
<svg style="left:1177.5px;top:54px" width="17" height="17" viewBox="0 0 17 17"><path d="M2 4.5L6 0.5V4.5Z" fill="#9aa7b0"/><path d="M7 0.5H12V7.5H2V5.5H7Z" fill="#9aa7b0"/><rect x="0" y="8" width="15.5" height="8" fill="#62b543"/><text x="7.8" y="14.8" font-family="Liberation Sans" font-weight="bold" font-size="7.5" fill="#2b2b2b" text-anchor="middle">MF</text></svg>
<div class="a ui" style="left:1197px;top:55px;font-size:12.6px;color:#6897bb;line-height:16px">AndroidManifest.xml</div>
<svg style="left:0;top:0" width="1" height="1"><g fill="#5fad65"><path d="M841 32.3L846.2 27H850L847.5 29.6L843.3 34.2Z"/><path d="M845.2 31.2L847.6 28.9L856 38.4L853.6 40.8Z"/></g></svg>
<div class="a" style="left:868px;top:23px;width:74px;height:22px;border:1px solid #5e6060;border-radius:3px"></div>
<svg style="left:877px;top:30px" width="12.5" height="8" viewBox="0 0 12.5 8"><path d="M0 8Q0 2 6.25 2Q12.5 2 12.5 8Z" fill="#68c67f"/><path d="M2.6 0.2L3.9 2.6M9.9 0.2L8.6 2.6" stroke="#68c67f" stroke-width="1.1"/><circle cx="3.7" cy="5.4" r="0.75" fill="#3c3f41"/><circle cx="8.8" cy="5.4" r="0.75" fill="#3c3f41"/></svg>
<svg style="left:0;top:0" width="1" height="1"><circle cx="888.5" cy="40" r="2.6" fill="#3c3f41"/><circle cx="888.5" cy="40" r="2" fill="#5fd35f"/></svg>
<div class="a ui" style="left:895px;top:26px;font-size:13.5px;color:#bbbbbb;line-height:16px">infix</div>
<svg style="left:0;top:0" width="1" height="1"><path d="M925.5 32H934.5L930 37Z" fill="#a8aaac"/></svg>
<div class="a" style="left:948px;top:23px;width:145px;height:22px;border:1px solid #5e6060;border-radius:3px"></div>
<svg style="left:0;top:0" width="1" height="1"><rect x="959.5" y="28.5" width="7" height="12" rx="1" stroke="#afb1b3" stroke-width="1.1" fill="none"/><rect x="964" y="35" width="5.5" height="4.5" fill="#3c3f41" stroke="#a66fd0" stroke-width="1"/><circle cx="969" cy="40" r="2.6" fill="#3c3f41"/><circle cx="969" cy="40" r="2" fill="#5fd35f"/></svg>
<div class="a ui" style="left:975px;top:26px;font-size:12.5px;color:#bbbbbb;line-height:16px">Nexus 5X API 25</div>
<svg style="left:0;top:0" width="1" height="1"><path d="M1077 32H1086L1081.5 37Z" fill="#a8aaac"/></svg>
<svg style="left:0;top:0" width="1" height="1"><path d="M1112.5 31H1110.5A4.6 4.6 0 0 0 1110.5 40.2" stroke="#5fad65" stroke-width="2" fill="none"/><path d="M1112 27L1117 31L1112 35Z" fill="#5fad65"/><rect x="1110.5" y="35.3" width="6.5" height="6.3" fill="#3c3f41"/><rect x="1111.2" y="36" width="5" height="5" fill="#bdbfc1"/></svg>
<svg style="left:0;top:0" width="1" height="1"><path d="M1137.5 31H1135.5A4.6 4.6 0 0 0 1135.5 40.2" stroke="#606366" stroke-width="2" fill="none"/><path d="M1137 27L1142 31L1137 35Z" fill="#606366"/><path d="M1136 41L1138.8 34.5L1141.6 41M1137 39H1140.6" stroke="#606366" stroke-width="1.3" fill="none"/></svg>
<svg style="left:0;top:0" width="1" height="1"><g fill="#606366"><rect x="1156" y="29" width="12" height="1.8"/><rect x="1156" y="32" width="12" height="1.8"/><rect x="1156" y="35.2" width="5.8" height="1.8"/><rect x="1156" y="38.2" width="8" height="1.8"/></g><path d="M1165 36.3H1167.5A2 2 0 0 1 1167.5 40.5H1166.5" stroke="#606366" stroke-width="1.2" fill="none"/><path d="M1163.5 36.3L1165.5 34.8V37.8Z" fill="#606366"/></svg>
<svg style="left:0;top:0" width="1" height="1"><g fill="#5fad65" stroke="#5fad65"><path d="M1183.5 31.5Q1188 27 1192.5 31.5V37A4.5 4.5 0 0 1 1183.5 37Z" stroke="none"/><path d="M1182 32.5H1194M1182 35.5H1194M1182 38.5H1194M1185 27.3L1186.6 29.6M1191 27.3L1189.4 29.6" stroke-width="1.2" fill="none"/></g><path d="M1185.5 34H1190.5M1185.5 37H1190.5" stroke="#3c3f41" stroke-width="1.1"/></svg>
<svg style="left:0;top:0" width="1" height="1"><path d="M1207 29Q1211.5 27.5 1216.5 29V33.5L1213.5 35.5V40L1211 41Q1207 38.5 1207 34Z" fill="#5f6163"/><rect x="1211.5" y="29" width="1.5" height="9" fill="#3c3f41"/><path d="M1215 33L1222 37.5L1215 42Z" fill="#5f6163"/></svg>
<svg style="left:0;top:0" width="1" height="1"><path d="M1234.3 38A7.5 7.5 0 0 1 1244 30.3" stroke="#3d8fd6" stroke-width="2" fill="none"/><path d="M1238.5 38L1244 31L1241.8 38.2Z" fill="#bdbfc1"/><path d="M1244.5 32L1246.5 34.5L1247 38H1243.5Z" fill="#bdbfc1"/></svg>
<div class="a ui" style="left:10px;top:111.6px;font-size:12.3px;letter-spacing:0.1px;color:#bbbbbb;line-height:14px;transform-origin:0 0;transform:rotate(-90deg) translate(0,-7px)">1: Project</div>
<div class="a" style="left:15.5px;top:111.5px;width:6px;height:1px;background:#bbbbbb;transform-origin:0 0;transform:rotate(-90deg)"></div>
<svg style="left:5px;top:117px" width="12" height="10"><path d="M0 0H11V9H0Z" fill="#bbbbbb"/><path d="M0 0V9" /><rect x="0" y="0" width="2" height="5" fill="#2d2f30"/></svg>
<div class="a ui" style="left:10px;top:191.5px;font-size:12.2px;letter-spacing:0.05px;color:#bbbbbb;line-height:14px;transform-origin:0 0;transform:rotate(-90deg) translate(0,-7px)">Commit</div>
<svg style="left:0;top:0" width="1" height="1"><circle cx="10.5" cy="202" r="3" stroke="#bbbbbb" stroke-width="1.5" fill="none"/><path d="M4 202H7.5M13.5 202H17" stroke="#bbbbbb" stroke-width="1.5"/></svg>
<div class="a ui" style="left:10px;top:340.8px;font-size:12.45px;letter-spacing:0px;color:#bbbbbb;line-height:14px;transform-origin:0 0;transform:rotate(-90deg) translate(0,-7px)">Resource Manager</div>
<svg style="left:0;top:0" width="1" height="1"><path d="M10.4 346L13.3 351H7.5Z" fill="#bbbbbb"/><rect x="5" y="352" width="5" height="5" fill="#bbbbbb"/><circle cx="13.4" cy="354.6" r="2.5" fill="#bbbbbb"/></svg>
<div class="a ui" style="left:10px;top:760px;font-size:12.5px;letter-spacing:0px;color:#bbbbbb;line-height:14px;transform-origin:0 0;transform:rotate(-90deg) translate(0,-7px)">Build Variants</div>
<svg style="left:4.8px;top:766.5px" width="11.5" height="8.5" viewBox="0 0 12.5 9"><path d="M0 9Q0 3 6.25 3Q12.5 3 12.5 9Z" fill="#bbbbbb"/><path d="M1.8 0.6L3.6 3.4M10.7 0.6L8.9 3.4" stroke="#bbbbbb" stroke-width="1.3" stroke-linecap="round"/></svg>
<div class="a ui" style="left:10px;top:1002px;width:200px;text-align:right;font-size:12.5px;color:#bbbbbb;line-height:14px;transform-origin:0 0;transform:rotate(-90deg) translate(0,-7px)">Z: Structure</div>
<svg style="left:0;top:0;z-index:40" width="1" height="1"><path d="M995 204L1051 123" stroke="#e8412b" stroke-width="3" stroke-linecap="round"/><path d="M1062 105L1053.5 130L1042 122.5Z" fill="#e8412b"/><path d="M635 328L575 311" stroke="#e8412b" stroke-width="3" stroke-linecap="round"/><path d="M554 307L581 309.5L577 318.5Z" fill="#e8412b"/></svg>
<div class="a" style="left:16px;top:654px;width:305px;height:25px;border:3px solid #e8412b;z-index:40"></div>
</body></html>
